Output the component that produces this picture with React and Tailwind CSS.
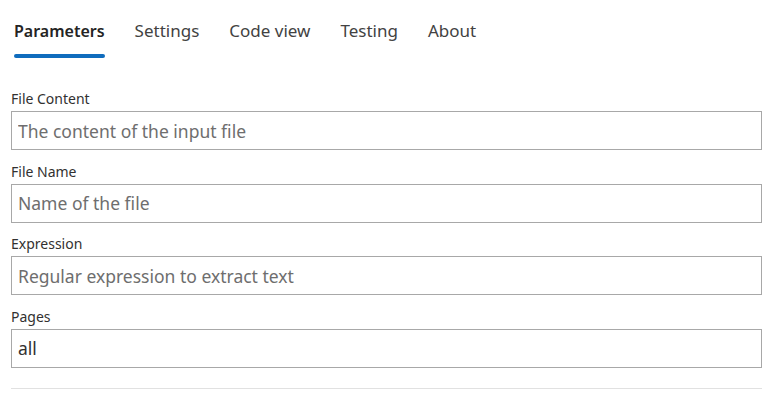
import { useState } from 'react';

const TABS = ['Parameters', 'Settings', 'Code view', 'Testing', 'About'];

const FIELDS = [
  { label: 'File Content', placeholder: 'The content of the input file' },
  { label: 'File Name', placeholder: 'Name of the file' },
  { label: 'Expression', placeholder: 'Regular expression to extract text' },
  { label: 'Pages', placeholder: '', value: 'all' },
];

function Field({ label, placeholder, value }) {
  const [text, setText] = useState(value || '');
  return (
    <div className="flex flex-col">
      <label className="text-[14px] leading-[20px] text-[#323130] mb-[2px]">{label}</label>
      <input
        type="text"
        value={text}
        onChange={(e) => setText(e.target.value)}
        placeholder={placeholder}
        className="h-[39px] w-full border border-[#a8a8a8] bg-white px-[6px] text-[17.5px] text-[#323130] placeholder:text-[#6e6e6e] outline-none"
      />
    </div>
  );
}

export default function App() {
  const [tab, setTab] = useState('Parameters');

  return (
    <div className="w-[773px] h-[405px] bg-white overflow-hidden" style={{ fontFamily: '"Noto Sans", "Open Sans", sans-serif' }}>
      <div className="flex gap-[30px] pl-[14px] pt-[18px]">
        {TABS.map((t) => (
          <button
            key={t}
            onClick={() => setTab(t)}
            className="flex flex-col items-stretch cursor-pointer"
          >
            <span
              className={
                'leading-[26px] ' +
                (tab === t ? 'text-[16px] font-semibold text-[#242424]' : 'text-[17px] text-[#424242]')
              }
            >
              {t}
            </span>
            <span
              className={'mt-[10px] h-[4px] rounded-full ' + (tab === t ? 'bg-[#0f6cbd]' : 'bg-transparent')}
            />
          </button>
        ))}
      </div>

      <div className="px-[11px] pt-[31px] flex flex-col gap-[11.5px]">
        {FIELDS.map((f) => (
          <Field key={f.label} {...f} />
        ))}
      </div>
      <div className="mx-[11px] mt-[20px] border-t border-[#e1e1e1]" />
    </div>
  );
}
